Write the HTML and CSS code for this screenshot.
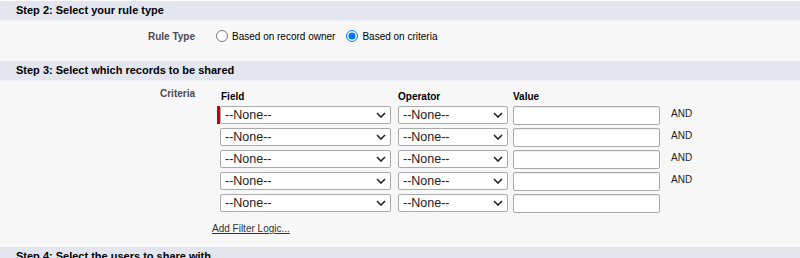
FILE: index.html
```html
<!DOCTYPE html>
<html>
<head>
<meta charset="utf-8">
<link rel="stylesheet" href="styles.css">
</head>
<body>
<div class="page">
  <div class="step-header">Step 2: Select your rule type</div>
  <div class="step-body body-rule">
    <div class="form-row">
      <div class="label-col label-rule">Rule Type</div>
      <div class="data-col radios">
        <label class="radio"><input type="radio" name="rt"><span>Based on record owner</span></label>
        <label class="radio"><input type="radio" name="rt" checked><span>Based on criteria</span></label>
      </div>
    </div>
  </div>
  <div class="step-header">Step 3: Select which records to be shared</div>
  <div class="step-body body-criteria">
    <div class="form-row">
      <div class="label-col label-criteria">Criteria</div>
      <div class="data-col">
        <div class="crit-grid">
          <div class="col-head head-field">Field</div>
          <div class="col-head">Operator</div>
          <div class="col-head">Value</div>
          <div></div>

          <div class="field-cell required"><div class="sel sel-field"><span>--None--</span><svg width="10" height="6" viewBox="0 0 10 6"><path d="M1 1l4 4 4-4" fill="none" stroke="#222" stroke-width="1.6"/></svg></div></div>
          <div class="sel sel-op"><span>--None--</span><svg width="10" height="6" viewBox="0 0 10 6"><path d="M1 1l4 4 4-4" fill="none" stroke="#222" stroke-width="1.6"/></svg></div>
          <div class="val"></div>
          <div class="and">AND</div>

          <div class="field-cell"><div class="sel sel-field"><span>--None--</span><svg width="10" height="6" viewBox="0 0 10 6"><path d="M1 1l4 4 4-4" fill="none" stroke="#222" stroke-width="1.6"/></svg></div></div>
          <div class="sel sel-op"><span>--None--</span><svg width="10" height="6" viewBox="0 0 10 6"><path d="M1 1l4 4 4-4" fill="none" stroke="#222" stroke-width="1.6"/></svg></div>
          <div class="val"></div>
          <div class="and">AND</div>

          <div class="field-cell"><div class="sel sel-field"><span>--None--</span><svg width="10" height="6" viewBox="0 0 10 6"><path d="M1 1l4 4 4-4" fill="none" stroke="#222" stroke-width="1.6"/></svg></div></div>
          <div class="sel sel-op"><span>--None--</span><svg width="10" height="6" viewBox="0 0 10 6"><path d="M1 1l4 4 4-4" fill="none" stroke="#222" stroke-width="1.6"/></svg></div>
          <div class="val"></div>
          <div class="and">AND</div>

          <div class="field-cell"><div class="sel sel-field"><span>--None--</span><svg width="10" height="6" viewBox="0 0 10 6"><path d="M1 1l4 4 4-4" fill="none" stroke="#222" stroke-width="1.6"/></svg></div></div>
          <div class="sel sel-op"><span>--None--</span><svg width="10" height="6" viewBox="0 0 10 6"><path d="M1 1l4 4 4-4" fill="none" stroke="#222" stroke-width="1.6"/></svg></div>
          <div class="val"></div>
          <div class="and">AND</div>

          <div class="field-cell"><div class="sel sel-field"><span>--None--</span><svg width="10" height="6" viewBox="0 0 10 6"><path d="M1 1l4 4 4-4" fill="none" stroke="#222" stroke-width="1.6"/></svg></div></div>
          <div class="sel sel-op"><span>--None--</span><svg width="10" height="6" viewBox="0 0 10 6"><path d="M1 1l4 4 4-4" fill="none" stroke="#222" stroke-width="1.6"/></svg></div>
          <div class="val"></div>
          <div></div>
        </div>
        <a class="filter-logic" href="#">Add Filter Logic...</a>
      </div>
    </div>
  </div>
  <div class="step-header">Step 4: Select the users to share with</div>
</div>
</body>
</html>
```

FILE: styles.css
```css
html, body {
  margin: 0;
  padding: 0;
  background: #ffffff;
}
body {
  font-family: "Liberation Sans", Arial, sans-serif;
  color: #000;
}
.page {
  padding-top: 1px;
}
.step-header {
  background: #e3e6ef;
  height: 19px;
  line-height: 19px;
  padding-left: 16px;
  font-size: 11px;
  font-weight: bold;
  color: #000;
}
.step-body {
  background: #f7f7f7;
  border-top: 1px solid #eef0f5;
}
.body-rule {
  height: 40px;
}
.body-criteria {
  height: 166px;
}
.form-row {
  display: grid;
  grid-template-columns: 195px 1fr;
}
.label-col {
  text-align: right;
  font-size: 10px;
  font-weight: bold;
  color: #4a4a56;
}
.label-rule {
  padding-top: 10px;
}
.label-criteria {
  padding-top: 7px;
}
.data-col {
  padding-left: 22px;
}
.radios {
  display: flex;
  align-items: center;
  padding-top: 9px;
  padding-left: 21px;
}
.radio {
  display: flex;
  align-items: center;
  font-size: 10px;
  color: #000;
  margin-right: 11px;
}
.radio input {
  margin: 0 4px 0 0;
  width: 12px;
  height: 12px;
}
.crit-grid {
  display: grid;
  grid-template-columns: 174px 110px 147px auto;
  column-gap: 7px;
  row-gap: 3px;
  align-items: start;
  padding-top: 10px;
}
.crit-grid > :nth-child(4n+3) {
  margin-left: -2px;
}
.col-head {
  font-size: 10px;
  font-weight: bold;
  color: #000;
  height: 12px;
  line-height: 12px;
}
.head-field {
  padding-left: 4px;
}
.field-cell {
  padding-left: 3px;
  display: flex;
}
.field-cell.required {
  padding-left: 0;
  border-left: 3px solid #c00;
  height: 18px;
}
.sel {
  box-sizing: border-box;
  height: 18px;
  background: #fff;
  border: 1px solid #a9a9a9;
  border-radius: 2px;
  display: flex;
  align-items: center;
  justify-content: space-between;
  padding: 0 4px 0 4px;
  font-size: 12.5px;
  color: #222;
}
.sel-field {
  width: 171px;
}
.sel-op {
  width: 110px;
}
.sel svg {
  display: block;
}
.val {
  box-sizing: border-box;
  width: 147px;
  height: 19px;
  background: #fff;
  border: 1px solid #a9a9a9;
  border-radius: 2px;
  box-shadow: inset 0 1px 1px rgba(0,0,0,0.08);
}
.and {
  font-size: 10px;
  color: #222;
  padding-left: 2px;
  padding-top: 2px;
}
.filter-logic {
  display: inline-block;
  margin-top: 10px;
  margin-left: -5px;
  font-size: 10px;
  color: #333;
  text-decoration: underline;
}
```
